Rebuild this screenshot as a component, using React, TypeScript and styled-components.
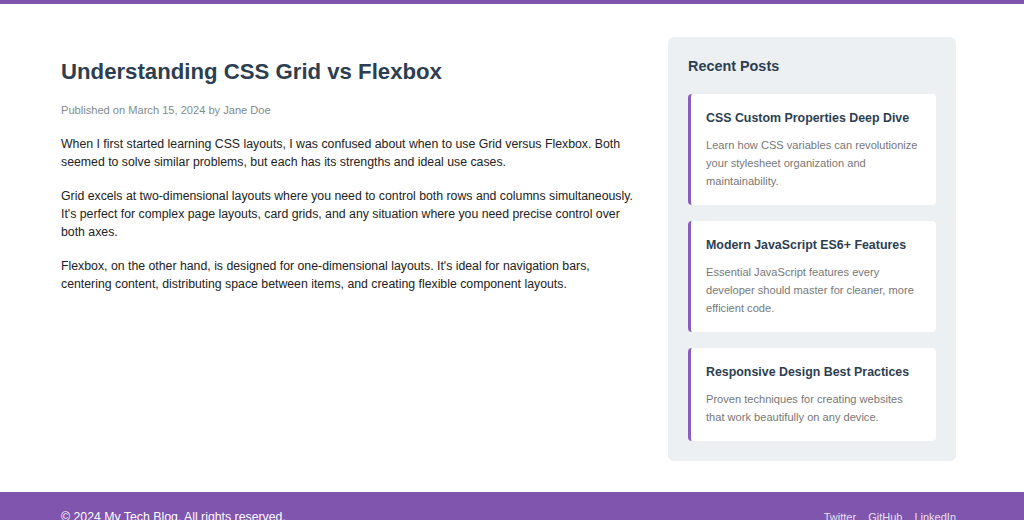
import styled, { createGlobalStyle } from "styled-components";

const GlobalStyle = createGlobalStyle`
  html, body {
    margin: 0;
    padding: 0;
    background: #ffffff;
    font-family: "Liberation Sans", Arial, sans-serif;
  }
  * {
    box-sizing: border-box;
  }
`;

const Page = styled.div`
  min-height: 520px;
  border-top: 4px solid #7f55ae;
  display: flex;
  flex-direction: column;
`;

const Layout = styled.div`
  display: grid;
  grid-template-columns: 1fr 288px;
  gap: 28px;
  padding: 33px 68px 31px 61px;
  align-items: start;
`;

const Article = styled.article`
  padding-top: 20px;
`;

const Title = styled.h1`
  margin: 0 0 14px;
  font-size: 22.2px;
  line-height: 30px;
  font-weight: bold;
  color: #2c3e50;
`;

const Meta = styled.p`
  margin: 0 0 16px;
  font-size: 11.1px;
  line-height: 18px;
  color: #7f8c8d;
`;

const Paragraph = styled.p`
  margin: 0 0 16px;
  font-size: 12.3px;
  line-height: 18px;
  color: #222;
`;

const Sidebar = styled.aside`
  background: #ecf0f3;
  border-radius: 6px;
  padding: 20px;
`;

const SidebarTitle = styled.h2`
  margin: 0 0 19px;
  font-size: 14.4px;
  line-height: 18px;
  font-weight: bold;
  color: #2c3e50;
`;

const PostList = styled.div`
  display: flex;
  flex-direction: column;
  gap: 16px;
`;

const PostCard = styled.div`
  background: #ffffff;
  border-left: 3px solid #8a5cbd;
  border-radius: 4px;
  padding: 15px 12px 15px 15px;
`;

const PostTitle = styled.h3`
  margin: 0 0 9px;
  font-size: 12.4px;
  line-height: 18px;
  font-weight: bold;
  color: #2c3e50;
`;

const PostExcerpt = styled.p`
  margin: 0;
  font-size: 11.1px;
  line-height: 18px;
  color: #777;
`;

const Footer = styled.footer`
  margin-top: auto;
  background: #7f55ae;
  color: #ffffff;
  display: flex;
  justify-content: space-between;
  align-items: flex-start;
  padding: 17px 68px 17px 61px;
  font-size: 12.3px;
  line-height: 16px;
`;

const FooterLinks = styled.nav`
  display: flex;
  gap: 12px;
`;

const FooterLink = styled.a`
  color: rgba(255, 255, 255, 0.85);
  font-size: 11px;
  text-decoration: none;
`;

const posts = [
  {
    title: "CSS Custom Properties Deep Dive",
    excerpt: "Learn how CSS variables can revolutionize your stylesheet organization and maintainability.",
  },
  {
    title: "Modern JavaScript ES6+ Features",
    excerpt: "Essential JavaScript features every developer should master for cleaner, more efficient code.",
  },
  {
    title: "Responsive Design Best Practices",
    excerpt: "Proven techniques for creating websites that work beautifully on any device.",
  },
];

export default function App() {
  return (
    <>
      <GlobalStyle />
      <Page>
        <Layout>
          <Article>
            <Title>Understanding CSS Grid vs Flexbox</Title>
            <Meta>Published on March 15, 2024 by Jane Doe</Meta>
            <Paragraph>
              When I first started learning CSS layouts, I was confused about when to use Grid versus Flexbox. Both
              seemed to solve similar problems, but each has its strengths and ideal use cases.
            </Paragraph>
            <Paragraph>
              Grid excels at two-dimensional layouts where you need to control both rows and columns simultaneously.
              It's perfect for complex page layouts, card grids, and any situation where you need precise control over
              both axes.
            </Paragraph>
            <Paragraph>
              Flexbox, on the other hand, is designed for one-dimensional layouts. It's ideal for navigation bars,
              centering content, distributing space between items, and creating flexible component layouts.
            </Paragraph>
          </Article>
          <Sidebar>
            <SidebarTitle>Recent Posts</SidebarTitle>
            <PostList>
              {posts.map((post) => (
                <PostCard key={post.title}>
                  <PostTitle>{post.title}</PostTitle>
                  <PostExcerpt>{post.excerpt}</PostExcerpt>
                </PostCard>
              ))}
            </PostList>
          </Sidebar>
        </Layout>
        <Footer>
          <span>© 2024 My Tech Blog. All rights reserved.</span>
          <FooterLinks>
            <FooterLink href="#">Twitter</FooterLink>
            <FooterLink href="#">GitHub</FooterLink>
            <FooterLink href="#">LinkedIn</FooterLink>
          </FooterLinks>
        </Footer>
      </Page>
    </>
  );
}
